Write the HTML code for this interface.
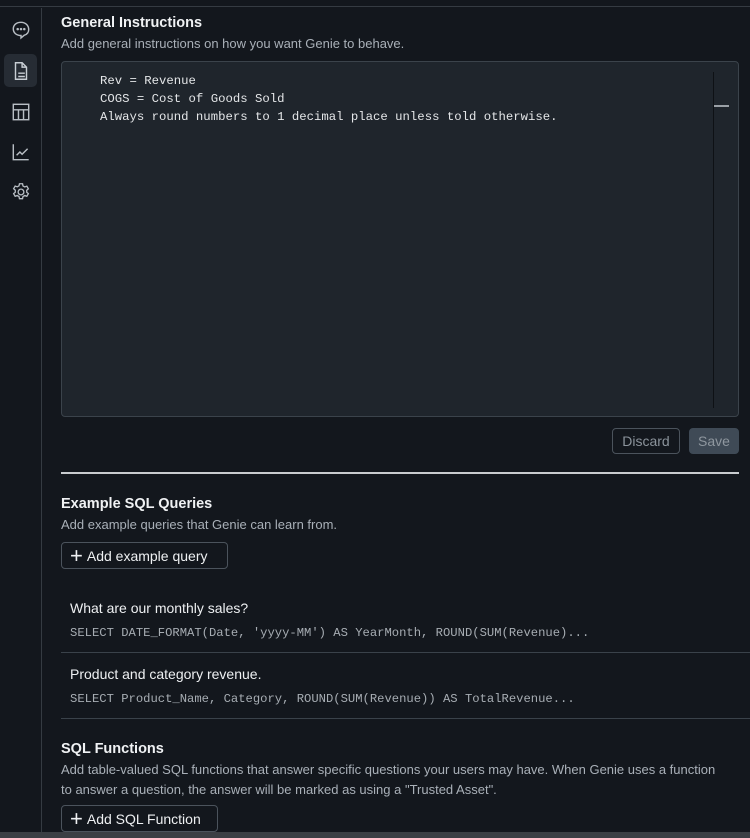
<!DOCTYPE html>
<html><head><meta charset="utf-8"><style>
*{box-sizing:border-box;margin:0;padding:0}
body{width:750px;height:838px;background:#13171d;font-family:"Liberation Sans",sans-serif;color:#e6e8ea;position:relative;overflow:hidden}
.top{position:absolute;left:0;top:0;width:750px;height:7px;background:#13171d;border-bottom:1px solid #353b42}
.side{position:absolute;left:0;top:8px;width:42px;height:824px;border-right:1px solid #353b42}
.ic{position:absolute;left:4px;width:33px;height:33px;display:flex;align-items:center;justify-content:center}
.act{background:#262c34;border-radius:5px}
.bot{position:absolute;left:0;top:832px;width:750px;height:6px;background:#3b3f44}
.h{position:absolute;left:61px;font-size:14.5px;font-weight:bold;color:#f0f2f4}
.s{position:absolute;left:61px;font-size:13px;color:#a9b0b8;line-height:20px}
.ta{position:absolute;left:61px;top:61px;width:678px;height:356px;background:#1f252c;border:1px solid #3b434b;border-radius:4px}
.mono{font-family:"Liberation Mono",monospace;}
.ta pre{position:absolute;left:38px;top:10px;font-size:12.3px;line-height:18px;color:#e4e6e8}
.sb{position:absolute;left:651px;top:10px;width:1px;height:336px;background:#0e1115}
.thumb{position:absolute;left:652px;top:43px;width:15px;height:2px;background:#9aa0a6}
.btn{position:absolute;border:1px solid #4b535c;border-radius:4px;font-size:14px;display:flex;align-items:center;justify-content:center}
.q{position:absolute;left:70px;font-size:14px;color:#eef0f2}
.qs{position:absolute;left:70px;font-size:12.2px;color:#a7adb3}
.line{position:absolute;left:61px;width:689px;height:1px;background:#3a424a}
</style></head><body>
<div class="top"></div>
<div class="side">
<div class="ic" style="top:5px"><svg width="22" height="22" viewBox="0 0 20 20" fill="none" stroke="#b8bec4" stroke-width="1.3"><path d="M10 3C5.6 3 3 5.6 3 9c0 3.4 2.6 6 7 6l0 2.2 3-2.5c2.6-.8 4-2.8 4-5.2 0-3.4-2.6-6.5-7-6.5z"/><circle cx="7" cy="9.2" r=".5" fill="#b8bec4"/><circle cx="10" cy="9.2" r=".5" fill="#b8bec4"/><circle cx="13" cy="9.2" r=".5" fill="#b8bec4"/></svg></div>
<div class="ic act" style="top:46px"><svg width="22" height="22" viewBox="0 0 20 20" fill="none" stroke="#c8ced4" stroke-width="1.3"><path d="M5 2.5h6l4 4v11H5z"/><path d="M11 2.5v4h4M7.5 12h6M7.5 15h6"/></svg></div>
<div class="ic" style="top:87px"><svg width="22" height="22" viewBox="0 0 20 20" fill="none" stroke="#b8bec4" stroke-width="1.3"><rect x="3" y="3" width="14" height="14"/><path d="M3 8h14M7.7 8v9M12.3 8v9"/></svg></div>
<div class="ic" style="top:127px"><svg width="22" height="22" viewBox="0 0 20 20" fill="none" stroke="#b8bec4" stroke-width="1.3"><path d="M3 3v14h14M6 13l3-3 2 2 5-5"/></svg></div>
<div class="ic" style="top:167px"><svg width="22" height="22" viewBox="0 0 20 20" fill="none" stroke="#b8bec4" stroke-width="1.2"><circle cx="10" cy="10" r="2.6"/><path d="M8.6 2.5h2.8l.4 2 1.6.9 1.9-.7 1.4 2.4-1.5 1.3v1.8l1.5 1.3-1.4 2.4-1.9-.7-1.6.9-.4 2H8.6l-.4-2-1.6-.9-1.9.7-1.4-2.4 1.5-1.3V8.3L3.3 7l1.4-2.4 1.9.7 1.6-.9z"/></svg></div>
</div>
<div class="h" style="top:15px">General Instructions</div>
<div class="s" style="top:34px">Add general instructions on how you want Genie to behave.</div>
<div class="ta"><pre class="mono">Rev = Revenue
COGS = Cost of Goods Sold
Always round numbers to 1 decimal place unless told otherwise.</pre><div class="sb"></div><div class="thumb"></div></div>
<div class="btn" style="left:612px;top:428px;width:68px;height:26px;color:#8b939b">Discard</div>
<div class="btn" style="left:689px;top:428px;width:50px;height:26px;color:#8f979f;background:#3f4a56;border-color:#3f4a56">Save</div>
<div style="position:absolute;left:61px;top:472px;width:678px;height:2px;background:#c9cccf"></div>
<div class="h" style="top:496px">Example SQL Queries</div>
<div class="s" style="top:515px">Add example queries that Genie can learn from.</div>
<div class="btn" style="left:61px;top:542px;width:167px;height:27px;color:#eef0f2;justify-content:flex-start;padding-left:8px"><span style="font-size:22px;font-weight:300;margin-right:4px;line-height:20px">+</span>Add example query</div>
<div class="q" style="top:600px">What are our monthly sales?</div>
<div class="qs mono" style="top:626px">SELECT DATE_FORMAT(Date, 'yyyy-MM') AS YearMonth, ROUND(SUM(Revenue)...</div>
<div class="line" style="top:652px"></div>
<div class="q" style="top:666px">Product and category revenue.</div>
<div class="qs mono" style="top:692px">SELECT Product_Name, Category, ROUND(SUM(Revenue)) AS TotalRevenue...</div>
<div class="line" style="top:718px"></div>
<div class="h" style="top:741px">SQL Functions</div>
<div class="s" style="top:760px;width:672px">Add table-valued SQL functions that answer specific questions your users may have. When Genie uses a function<br>to answer a question, the answer will be marked as using a "Trusted Asset".</div>
<div class="btn" style="left:61px;top:805px;width:157px;height:27px;color:#eef0f2;justify-content:flex-start;padding-left:8px"><span style="font-size:22px;font-weight:300;margin-right:4px;line-height:20px">+</span>Add SQL Function</div>
<div class="bot"></div>
</body></html>
